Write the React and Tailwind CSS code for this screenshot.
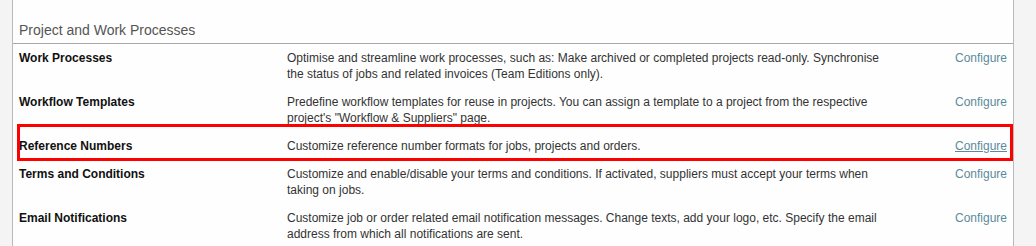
import React from "react";

const rows = [
  {
    name: "Work Processes",
    desc: "Optimise and streamline work processes, such as: Make archived or completed projects read-only. Synchronise the status of jobs and related invoices (Team Editions only).",
  },
  {
    name: "Workflow Templates",
    desc: "Predefine workflow templates for reuse in projects. You can assign a template to a project from the respective project's \"Workflow & Suppliers\" page.",
  },
  {
    name: "Reference Numbers",
    desc: "Customize reference number formats for jobs, projects and orders.",
    highlight: true,
  },
  {
    name: "Terms and Conditions",
    desc: "Customize and enable/disable your terms and conditions. If activated, suppliers must accept your terms when taking on jobs.",
  },
  {
    name: "Email Notifications",
    desc: "Customize job or order related email notification messages. Change texts, add your logo, etc. Specify the email address from which all notifications are sent.",
  },
];

export default function App() {
  return (
    <div
      className="w-full h-[246px] overflow-hidden bg-[#f4f4f4] flex"
      style={{ fontFamily: '"Liberation Sans", Arial, sans-serif' }}
    >
      <div className="ml-[12px] w-[1002px] h-full bg-[#fefefe] border-l border-r border-[#b9b9b9] flex flex-col">
        <div className="h-[44px] shrink-0 border-b border-[#a9a9a9] flex items-end pl-[6px] pb-[5px]">
          <span className="text-[14px] leading-[16px] text-[#555]">Project and Work Processes</span>
        </div>
        {rows.map((r) => (
          <div key={r.name} className="relative shrink-0 flex pt-[6px] pb-[6px] text-[12px] leading-[16px]">
            <div className="w-[274px] shrink-0 pl-[6px] font-bold text-[#111]">{r.name}</div>
            <div className="w-[605px] shrink-0 text-[#333]">{r.desc}</div>
            <div className="flex-1 text-right pr-[6px]">
              <a className={"text-[#5b8a9b] cursor-pointer " + (r.highlight ? "underline" : "")}>Configure</a>
            </div>
            {r.highlight && (
              <div className="absolute top-[-8px] bottom-[-1px] left-[4px] right-0 border-[3px] border-[#ff0000] pointer-events-none" />
            )}
          </div>
        ))}
      </div>
    </div>
  );
}
